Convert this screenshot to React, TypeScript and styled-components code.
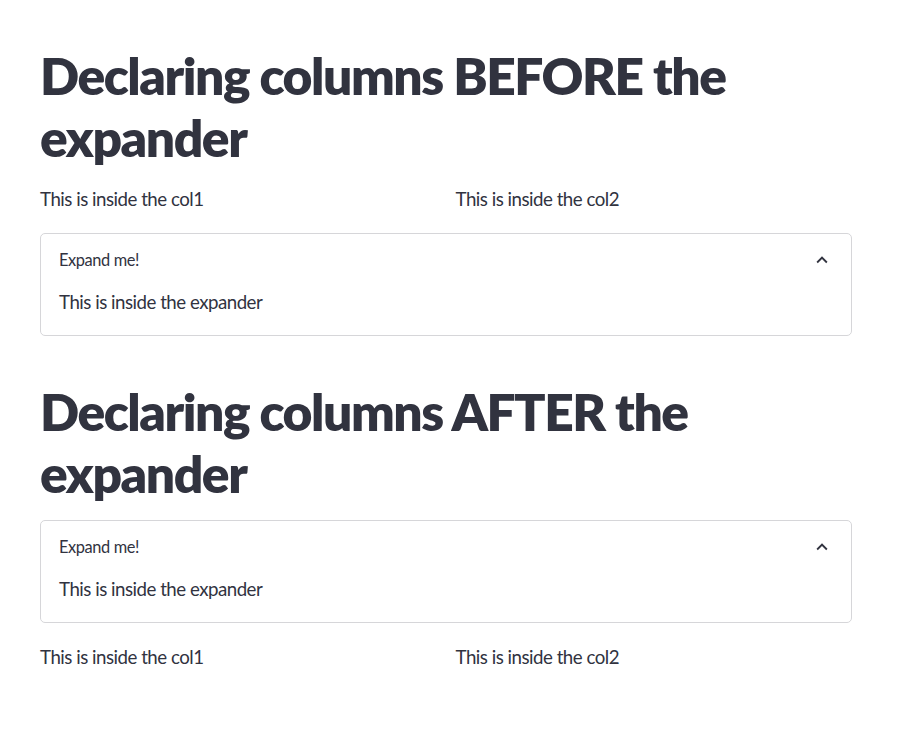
import React from "react";
import styled, { createGlobalStyle } from "styled-components";

const GlobalStyle = createGlobalStyle`
  body {
    margin: 0;
    background: #ffffff;
    color: #31333f;
    font-family: "Lato", "Noto Sans", sans-serif;
  }
`;

const Main = styled.main`
  display: flex;
  flex-direction: column;
  gap: 19px;
  width: 812px;
  padding: 19px 0 40px 40px;
`;

const Heading = styled.h1`
  margin: 0 0 -3px;
  padding-top: 25px;
  font-size: 51.5px;
  line-height: 62px;
  font-weight: 800;
  letter-spacing: -1.45px;
  color: #31333f;
`;

const Columns = styled.div`
  display: grid;
  grid-template-columns: 1fr 1fr;
  column-gap: 19px;
`;

const Text = styled.p`
  margin: 0;
  font-size: 18.7px;
  line-height: 30px;
  letter-spacing: -0.5px;
  color: #31333f;
`;

const Expander = styled.details`
  border: 1px solid #d6d6d9;
  border-radius: 5px;
  padding: 14px 18px 18px;
`;

const Summary = styled.summary`
  display: flex;
  align-items: center;
  justify-content: space-between;
  list-style: none;
  font-size: 16.4px;
  line-height: 24px;
  letter-spacing: -0.4px;
  margin-bottom: 15px;
  cursor: pointer;
  &::-webkit-details-marker {
    display: none;
  }
`;

const Chevron = () => (
  <svg width="22" height="22" viewBox="0 0 24 24" fill="#31333f">
    <path d="M12 8l-6 6 1.41 1.41L12 10.83l4.59 4.58L18 14z" />
  </svg>
);

function ExpandBox() {
  return (
    <Expander open>
      <Summary>
        Expand me!
        <Chevron />
      </Summary>
      <Text>This is inside the expander</Text>
    </Expander>
  );
}

function ColumnPair() {
  return (
    <Columns>
      <Text>This is inside the col1</Text>
      <Text>This is inside the col2</Text>
    </Columns>
  );
}

export default function App() {
  return (
    <>
      <GlobalStyle />
      <Main>
        <Heading>Declaring columns BEFORE the expander</Heading>
        <ColumnPair />
        <ExpandBox />
        <Heading>Declaring columns AFTER the expander</Heading>
        <ExpandBox />
        <ColumnPair />
      </Main>
    </>
  );
}
